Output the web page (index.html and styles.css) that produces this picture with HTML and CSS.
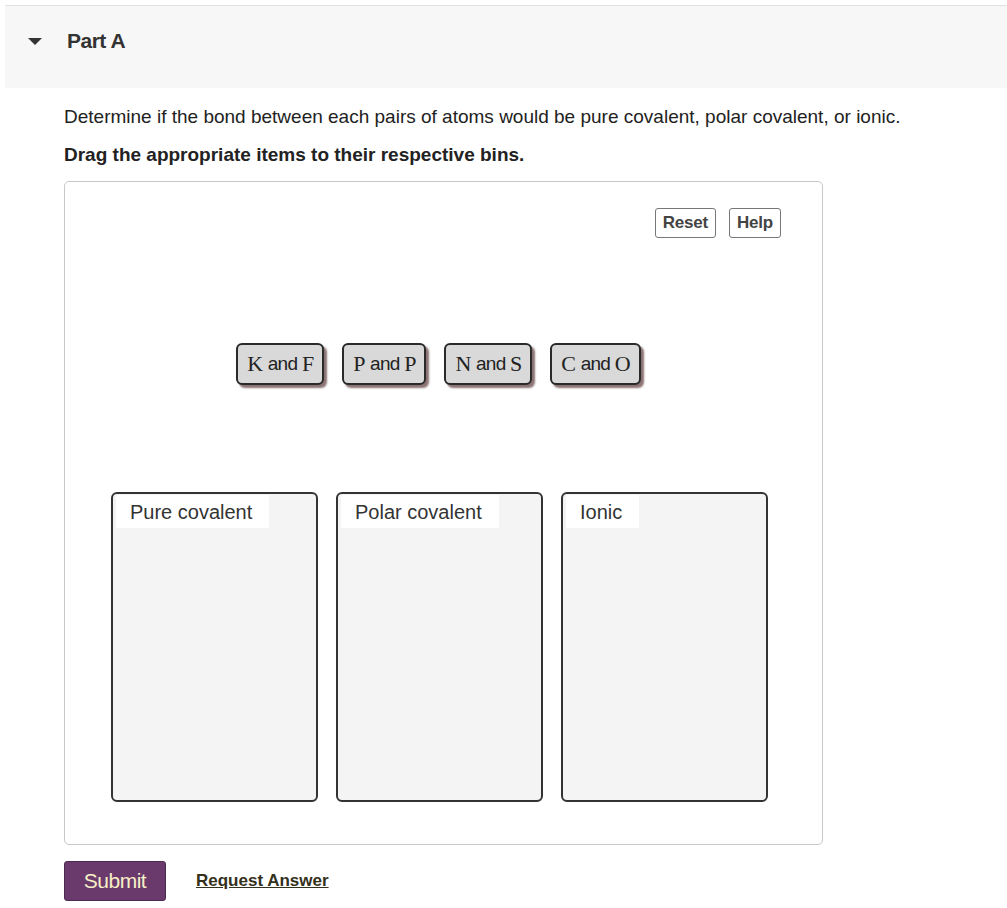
FILE: index.html
```html
<!DOCTYPE html>
<html lang="en">
<head>
    <meta charset="UTF-8">
    <title>Part A</title>
    <link rel="stylesheet" href="styles.css">
</head>
<body>
    <div class="part">
        <div class="part-header">
            <span class="caret"></span>
            <h2 class="part-title">Part A</h2>
        </div>

        <div class="part-body">
            <p class="prompt">Determine if the bond between each pairs of atoms would be pure covalent, polar covalent, or ionic.</p>
            <p class="instruction">Drag the appropriate items to their respective bins.</p>

            <div class="dnd">
                <div class="dnd-tools">
                    <button class="tool-btn">Reset</button>
                    <button class="tool-btn">Help</button>
                </div>

                <div class="tokens">
                    <div class="token"><span class="el">K</span> and <span class="el">F</span></div>
                    <div class="token"><span class="el">P</span> and <span class="el">P</span></div>
                    <div class="token"><span class="el">N</span> and <span class="el">S</span></div>
                    <div class="token"><span class="el">C</span> and <span class="el">O</span></div>
                </div>

                <div class="bins">
                    <div class="bin"><div class="bin-label">Pure covalent</div></div>
                    <div class="bin"><div class="bin-label">Polar covalent</div></div>
                    <div class="bin"><div class="bin-label">Ionic</div></div>
                </div>
            </div>

            <div class="actions">
                <button class="submit-btn">Submit</button>
                <a class="request-link" href="#">Request Answer</a>
            </div>
        </div>
    </div>
</body>
</html>
```

FILE: styles.css
```css
* {
    margin: 0;
    padding: 0;
    box-sizing: border-box;
}

body {
    font-family: 'Liberation Sans', Arial, sans-serif;
    color: #222;
    background: #fff;
    padding-top: 5px;
}

.part {
    margin-left: 5px;
    border-top: 1px solid #e2e2e2;
}

.part-header {
    height: 82px;
    background: #f7f7f7;
    display: flex;
    align-items: center;
    padding-left: 23px;
    padding-bottom: 12px;
}

.caret {
    width: 0;
    height: 0;
    border-left: 7px solid transparent;
    border-right: 7px solid transparent;
    border-top: 7px solid #333;
    margin-right: 25px;
}

.part-title {
    font-size: 21px;
    font-weight: bold;
    color: #333;
    letter-spacing: -0.5px;
}

.part-body {
    padding-left: 59px;
}

.prompt {
    margin-top: 18px;
    font-size: 19px;
    line-height: 22px;
    color: #222;
}

.instruction {
    margin-top: 16px;
    font-size: 19px;
    line-height: 22px;
    font-weight: bold;
    color: #222;
}

.dnd {
    margin-top: 15px;
    width: 759px;
    height: 664px;
    border: 1px solid #c8c8c8;
    border-radius: 5px;
    padding: 26px 41px 0 46px;
}

.dnd-tools {
    display: flex;
    justify-content: flex-end;
    gap: 13px;
}

.tool-btn {
    font-family: 'Liberation Sans', Arial, sans-serif;
    font-size: 17px;
    font-weight: bold;
    color: #444;
    background: #fff;
    border: 1px solid #777;
    border-radius: 3px;
    height: 30px;
    padding: 0 7px;
    letter-spacing: -0.2px;
}

.tokens {
    display: flex;
    justify-content: center;
    gap: 18px;
    margin-top: 105px;
    padding-right: 15px;
}

.token {
    background: #d9d9d9;
    border: 2px solid #2a2a2a;
    border-radius: 6px;
    box-shadow: 3px 3px 2px rgba(60, 20, 20, 0.6);
    height: 42px;
    padding: 0 8px 0 9px;
    display: flex;
    align-items: center;
    font-size: 19px;
    letter-spacing: -0.7px;
    color: #222;
    white-space: pre;
}

.token .el {
    font-family: 'Liberation Serif', 'Times New Roman', serif;
    font-size: 22px;
    letter-spacing: 0;
}

.bins {
    display: flex;
    gap: 18px;
    margin-top: 107px;
}

.bin {
    width: 207px;
    height: 310px;
    background: #f4f4f4;
    border: 2px solid #333;
    border-radius: 6px;
    padding: 1px 0 0 3px;
}

.bin-label {
    display: inline-block;
    background: #fff;
    font-size: 20px;
    line-height: 23px;
    color: #333;
    padding: 6px 17px 4px 14px;
}

.actions {
    display: flex;
    align-items: center;
    margin-top: 16px;
    gap: 30px;
}

.submit-btn {
    width: 102px;
    height: 40px;
    background: #6b3a6d;
    border: 1px solid #4d2a50;
    border-radius: 3px;
    color: #f6f0c6;
    font-family: 'Liberation Sans', Arial, sans-serif;
    font-size: 21px;
    letter-spacing: -0.5px;
}

.request-link {
    font-size: 17px;
    font-weight: bold;
    color: #33301c;
    text-decoration: underline;
}
```
